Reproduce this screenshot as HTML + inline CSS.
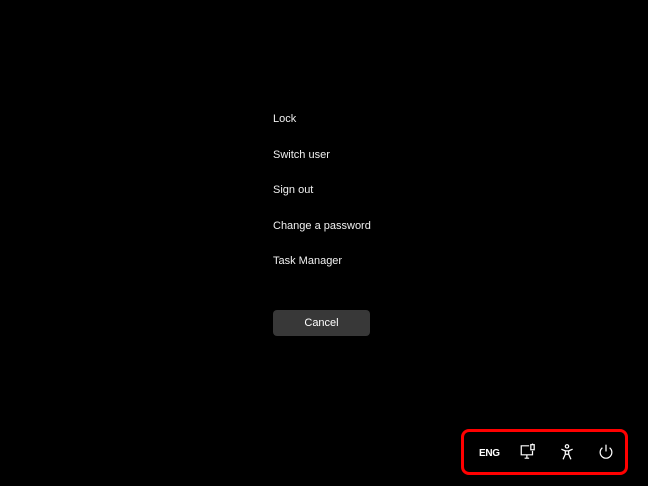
<!DOCTYPE html>
<html><head><style>
html,body{margin:0;padding:0;background:#000;width:648px;height:486px;overflow:hidden;font-family:"Liberation Sans",sans-serif;color:#fff}
.i{position:absolute;left:273px;font-size:11px;color:#f0f0f0}
.btn{position:absolute;left:273px;top:310px;width:97px;height:26px;background:#383838;border-radius:4px;font-size:11px;text-align:center;line-height:27px;color:#fff}
.box{position:absolute;left:461px;top:429px;width:161px;height:40px;border:3px solid #f00;border-radius:8px}
.eng{position:absolute;left:479px;top:448px;font-size:10px;font-weight:bold;letter-spacing:-0.3px}
svg{position:absolute}
</style></head><body>
<div class="i" style="top:113px">Lock</div>
<div class="i" style="top:149px">Switch user</div>
<div class="i" style="top:184px">Sign out</div>
<div class="i" style="top:220px">Change a password</div>
<div class="i" style="top:255px">Task Manager</div>
<div class="btn">Cancel</div>
<div class="box"></div>
<div class="eng">ENG</div>
<svg style="left:519px;top:443px" width="18" height="18" viewBox="0 0 16 16" fill="none" stroke="#fff" stroke-width="1.1">
<path d="M9 2.5H2v8h10V7"/><path d="M5 13.5h4M7 10.5v3"/><rect x="10.5" y="1.5" width="3" height="4.5"/><path d="M12 0.5v1"/></svg>
<svg style="left:558px;top:443px" width="18" height="18" viewBox="0 0 16 16" fill="none" stroke="#fff" stroke-width="1.1">
<circle cx="8" cy="3" r="1.5"/><path d="M3 5.5l3.5 1.5h3L13 5.5M6.5 7v3l-2 4.5M9.5 7v3l2 4.5M6.5 10h3"/></svg>
<svg style="left:597px;top:443px" width="18" height="18" viewBox="0 0 16 16" fill="none" stroke="#fff" stroke-width="1.1">
<path d="M8 1.5v6"/><path d="M4.8 4.2a5.2 5.2 0 1 0 6.4 0"/></svg>
</body></html>
